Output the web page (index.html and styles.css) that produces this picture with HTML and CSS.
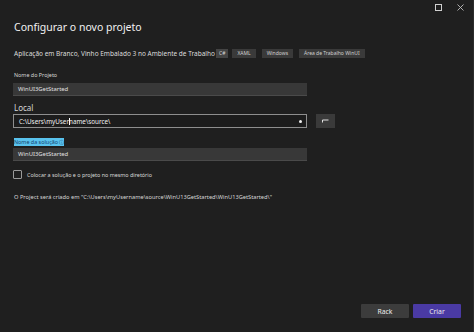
FILE: index.html
```html
<!DOCTYPE html>
<html lang="pt">
<head>
  <meta charset="UTF-8" />
  <meta name="viewport" content="width=device-width, initial-scale=1.0"/>
  <title>Configurar o novo projeto</title>
  <link rel="stylesheet" href="styles.css">
</head>
<body>
  <div class="page">
    <div class="titlebar">
      <svg class="ctl" width="7" height="7" viewBox="0 0 7 7"><rect x="0.5" y="0.5" width="6" height="6" fill="none" stroke="#d0d0d0" stroke-width="1"/></svg>
      <svg class="ctl" width="7" height="7" viewBox="0 0 7 7"><path d="M0.5 0.5 L6.5 6.5 M6.5 0.5 L0.5 6.5" stroke="#bdbdbd" stroke-width="0.9"/></svg>
    </div>

    <div class="main">
      <h1>Configurar o novo projeto</h1>

      <div class="template">
        <span class="template-name">Aplicação em Branco, Vinho Embalado 3 no Ambiente de Trabalho</span>
        <span class="tag tag-over">C#</span>
        <span class="tag tag-first">XAML</span>
        <span class="tag">Windows</span>
        <span class="tag">Área de Trabalho WinUI</span>
      </div>

      <p class="label first-label">Nome do Projeto</p>
      <div class="field">WinUI3GetStarted</div>

      <p class="label big-label">Local</p>
      <div class="location-row">
        <div class="field field-focus">
          <span>C:\Users\myUser<span class="caret"></span>name\source\</span>
          <span class="dropdown"></span>
        </div>
        <button class="browse">
          <svg width="7" height="4" viewBox="0 0 7 4"><path d="M0.5 3.5 V1 H6.5" fill="none" stroke="#e0e0e0" stroke-width="1"/></svg>
        </button>
      </div>

      <p class="label solution-label"><span class="selected">Nome da solução ⓘ</span></p>
      <div class="field">WinUI3GetStarted</div>

      <label class="check-row">
        <span class="checkbox"></span>
        <span>Colocar a solução e o projeto no mesmo diretório</span>
      </label>

      <p class="path">O Project será criado em "C:\Users\myUsername\source\WinU13GetStarted\WinU13GetStarted\"</p>
    </div>

    <div class="footer">
      <button class="btn btn-back">Rack</button>
      <button class="btn btn-create">Criar</button>
    </div>
  </div>
</body>
</html>
```

FILE: styles.css
```css
body {
  margin: 0;
  background-color: #1f1f1f;
  font-family: "Noto Sans", "Open Sans", sans-serif;
  color: #e6e6e6;
}

.page {
  display: flex;
  flex-direction: column;
  width: 474px;
  height: 332px;
  box-sizing: border-box;
  border-right: 1px solid #2c2c2c;
}

.titlebar {
  height: 14px;
  display: flex;
  justify-content: flex-end;
  align-items: center;
  gap: 15px;
  padding-right: 9px;
}

.main {
  padding: 0 13px;
}

h1 {
  margin: 5px 0 0 1px;
  font-size: 10.5px;
  line-height: 16px;
  font-weight: normal;
  color: #f2f2f2;
}

.template {
  display: flex;
  align-items: center;
  height: 10px;
  margin: 13px 0 0 1px;
}

.template-name {
  font-size: 6.5px;
  color: #dcdcdc;
  white-space: nowrap;
}

.tag {
  height: 9px;
  line-height: 9px;
  padding: 0 5px;
  margin-left: 6px;
  font-size: 5px;
  color: #d0d0d0;
  background-color: #3a3a3a;
  white-space: nowrap;
}

.tag-over {
  margin-left: 1px;
  padding: 0 3px;
  background-color: #444444;
}

.tag-first {
  margin-left: 4px;
}

.label {
  margin: 0 0 0 1px;
  font-size: 5.4px;
  line-height: 8px;
  color: #d6d6d6;
}

.first-label {
  margin-top: 13px;
}

.big-label {
  margin-top: 7px;
  font-size: 8px;
  line-height: 10px;
}

.solution-label {
  margin-top: 10px;
}

.selected {
  background-color: #59c3ee;
  color: #16436e;
}

.field {
  display: flex;
  align-items: center;
  justify-content: space-between;
  width: 294px;
  height: 13px;
  margin-top: 4px;
  padding: 0 4px 0 5px;
  box-sizing: border-box;
  background-color: #383838;
  border-bottom: 1px solid #4a4a4a;
  font-size: 5.9px;
  color: #e0e0e0;
}

.solution-label + .field {
  margin-top: 2px;
}

.location-row {
  display: flex;
  align-items: center;
  gap: 9px;
  margin-top: 1px;
}

.field-focus {
  height: 14px;
  margin-top: 0;
  background-color: #1c1c1c;
  border: 1px solid #8e8e8e;
  font-size: 6.3px;
  color: #f0f0f0;
}

.caret {
  display: inline-block;
  width: 1px;
  height: 7px;
  margin: 0 -1px 0 0;
  vertical-align: middle;
  background-color: #ffffff;
}

.dropdown {
  width: 3px;
  height: 3px;
  border-radius: 50%;
  background-color: #f0f0f0;
}

.browse {
  display: flex;
  align-items: center;
  justify-content: center;
  width: 19px;
  height: 14px;
  padding: 0;
  border: none;
  background-color: #3a3a3a;
}

.check-row {
  display: flex;
  align-items: center;
  gap: 5px;
  height: 9px;
  margin-top: 9px;
  font-size: 5.4px;
  color: #d8d8d8;
}

.checkbox {
  width: 7px;
  height: 7px;
  border: 1px solid #9a9a9a;
  border-radius: 1px;
}

.path {
  margin: 14px 0 0 1px;
  font-size: 5.7px;
  line-height: 8px;
  color: #d6d6d6;
  white-space: nowrap;
}

.footer {
  margin-top: auto;
  display: flex;
  justify-content: flex-end;
  gap: 4px;
  padding: 0 12px 14px 0;
}

.btn {
  width: 48px;
  height: 14px;
  padding: 0;
  border: none;
  border-radius: 1px;
  font-family: "Noto Sans", sans-serif;
  font-size: 6.8px;
  color: #ececec;
}

.btn-back {
  background-color: #3c3c3c;
}

.btn-create {
  background-color: #4a3aa4;
}
```
